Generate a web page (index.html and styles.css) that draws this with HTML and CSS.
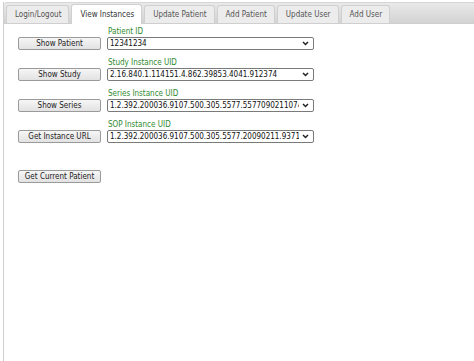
FILE: index.html
```html
<!DOCTYPE html>
<html lang="en">
<head>
    <meta charset="UTF-8">
    <title>View Instances</title>
    <link rel="stylesheet" href="styles.css">
</head>
<body>
<div class="panel">
    <ul class="tabs">
        <li class="tab">Login/Logout</li>
        <li class="tab active">View Instances</li>
        <li class="tab">Update Patient</li>
        <li class="tab">Add Patient</li>
        <li class="tab">Update User</li>
        <li class="tab">Add User</li>
    </ul>

    <div class="content">
        <div class="row">
            <button class="btn" type="button">Show Patient</button>
            <div class="field">
                <label for="patientId">Patient ID</label>
                <select id="patientId"><option>12341234</option></select>
            </div>
        </div>
        <div class="row">
            <button class="btn" type="button">Show Study</button>
            <div class="field">
                <label for="studyUid">Study Instance UID</label>
                <select id="studyUid"><option>2.16.840.1.114151.4.862.39853.4041.912374</option></select>
            </div>
        </div>
        <div class="row">
            <button class="btn" type="button">Show Series</button>
            <div class="field">
                <label for="seriesUid">Series Instance UID</label>
                <select id="seriesUid"><option>1.2.392.200036.9107.500.305.5577.557709021107405</option></select>
            </div>
        </div>
        <div class="row">
            <button class="btn" type="button">Get Instance URL</button>
            <div class="field">
                <label for="sopUid">SOP Instance UID</label>
                <select id="sopUid"><option>1.2.392.200036.9107.500.305.5577.20090211.93715.1</option></select>
            </div>
        </div>

        <button class="btn current" type="button">Get Current Patient</button>
    </div>
</div>
</body>
</html>
```

FILE: styles.css
```css
body {
    margin: 0;
    background: #fff;
    font-family: "DejaVu Sans", Verdana, sans-serif;
    font-stretch: condensed;
    font-size: 8px;
    color: #222;
}

.panel {
    margin: 2px 0 0 3px;
    min-height: 359px;
    border-left: 1px solid #cfcfcf;
}

.tabs {
    display: flex;
    gap: 2px;
    list-style: none;
    margin: 0;
    padding: 2px 0 0 2px;
    height: 18px;
    background: linear-gradient(#e9e9e9, #d3d3d3);
    border-top: 1px solid #d6d6d6;
    border-bottom: 1px solid #cfcfcf;
    border-radius: 3px 0 0 0;
}

.tab {
    display: flex;
    align-items: center;
    padding: 0 7px 0 8px;
    height: 18px;
    background: #ececec;
    border: 1px solid #d0d0d0;
    border-bottom: none;
    border-radius: 3px 3px 0 0;
    color: #555;
    box-sizing: border-box;
}

.tab.active {
    background: #fff;
    height: 20px;
    margin-top: -1px;
    color: #333;
}

.content {
    display: flex;
    flex-direction: column;
    align-items: flex-start;
    padding: 2px 0 0 14px;
}

.row {
    display: flex;
    align-items: flex-end;
    gap: 6px;
    margin-bottom: 7px;
}

.btn {
    width: 83px;
    height: 13px;
    padding: 0;
    font: inherit;
    color: #222;
    background: linear-gradient(#f6f6f6, #e2e2e2);
    border: 1px solid #9a9a9a;
    border-radius: 2px;
}

.btn.current {
    margin-top: 20px;
}

.field {
    display: flex;
    flex-direction: column;
    width: 207px;
}

label {
    color: #2f8a2f;
    height: 11px;
    line-height: 12px;
    padding-left: 1px;
}

select {
    -webkit-appearance: none;
    appearance: none;
    width: 207px;
    height: 13px;
    padding: 0 14px 0 2px;
    font: inherit;
    color: #111;
    background: #fff url("data:image/svg+xml,%3Csvg xmlns='http://www.w3.org/2000/svg' width='7' height='5'%3E%3Cpath d='M1 1l2.5 2.5L6 1' fill='none' stroke='%23222' stroke-width='1.5'/%3E%3C/svg%3E") no-repeat right 4px center;
    border: 1px solid #7a7a7a;
    border-radius: 2px;
}
```
